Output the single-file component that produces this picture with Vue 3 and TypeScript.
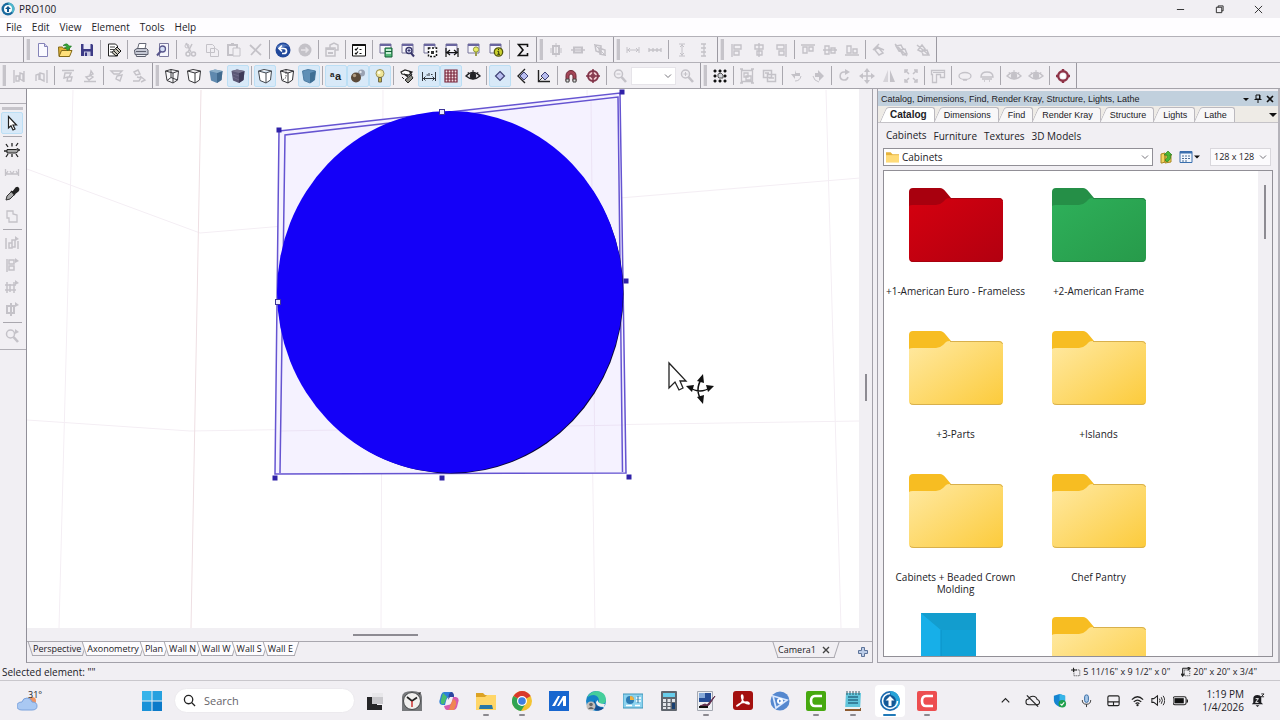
<script setup lang="ts">
import { ref } from 'vue'

interface Tool { name: string; on: boolean; off: boolean }

const parse = (spec: string): Tool[] =>
  spec.split(' ').map((t) => ({
    name: t.replace(/^[*-]/, ''),
    on: t.startsWith('*'),
    off: t.startsWith('-'),
  }))

const topRow = [
  'new open save | prefs | print preview | -cut -copy -paste -delete | undo -redo | -properties | checklist | winReport winZoom winSelect winWidth winLight winInfo | sum',
  '-centerV -centerH -centerD',
  '-spanH -stackH | -spanV -stackV',
  '-alignL -alignC -alignR | -alignT -alignM -alignB | -diagA -diagB -diagC',
].map(parse)

const bottomRow = [
  '-fitL -fitR | -fitT -fitB | -fitF -fitK',
  'cubeWire cubeLine cubeFill *cubeTex | *cubeSolid cubeEdge *cubeShade | *letters *spheres *bulb | brush *dims *grid eye | *snapNode snapEdge snapPlane | magnet target | -zoomOut combo -zoomIn',
  'selectAll | -group -ungroup | -rotL -rotR | -turn -move -mirror -scale | -shape | -lampA -lampB | -eyeA -eyeB | aim',
].map(parse)

const sideTools = parse('*pointer | light -measure picker -outline | -posA -posB -posC -posD | -find')

const cube = 'M1.500 3L7 1.500L14.500 3L13.500 12L9 15L3 12.500Z'
const cubeIn = 'M1.500 3L9 5L14.500 3M9 5V15'
const win = '<path d="M2 2h11v9H2z" fill="#f7f6fb" stroke="#77749a"/><path d="M2 3h11" stroke="#6a66a0" stroke-width="2"/>'
const cur = 'stroke="currentColor" fill="none"'
const eyeD = '<path d="M1 8Q8 1 15 8Q8 14 1 8Z" fill="none" stroke="currentColor" stroke-width="1.4"/><circle cx="8" cy="8" r="3.2" fill="currentColor"/><path d="M3 4l1 2M8 2v2M13 4l-1 2" stroke="currentColor"/>'
const lens = '<circle cx="6.500" cy="6" r="4" fill="none" stroke="currentColor" stroke-width="1.500"/><path d="M9.500 9L14 14" stroke="currentColor" stroke-width="2.600"/>'

const glyphs: Record<string, string> = {
  new: '<path d="M3.500 1.500h6l3 3v10h-9z" fill="#fafaff" stroke="#8583b8"/><path d="M9.500 1.500v3h3" fill="#d5d5f2" stroke="#8583b8"/>',
  open: '<path d="M1.500 5h4l1 1.500h6V14H2z" fill="#e4b335" stroke="#846a18"/><path d="M2 14.500L4.500 8.500H15L12.500 14.500Z" fill="#ffe07a" stroke="#846a18"/><path d="M6 3.500Q10 0 12 4h2.500L11 8.500 7.500 5.500H10Q9 3 6 3.500Z" fill="#35a535" stroke="#1f7422" stroke-width=".6"/>',
  save: '<path d="M2 2h11l1 1v11H2z" fill="#3d3b86"/><path d="M4.500 2h7v5h-7z" fill="#e9e9f6"/><path d="M5 9.500h6.500V14H5z" fill="#c9c9e2"/><path d="M6 10.500h2V14H6z" fill="#3d3b86"/>',
  prefs: '<path d="M2.500 2h7l2 2v10h-9z" fill="#fff" stroke="#222"/><path d="M4 5h5M4 7.500h4M4 10h3" stroke="#444"/><path d="M6 10.500L11 5l4 4-5 5z" fill="#c9c6b8" stroke="#111"/><path d="M8 9l3 3M10 7l3 3" stroke="#222"/>',
  print: '<path d="M4.500 7L6 1.500h7L12 7z" fill="#fff" stroke="#666977"/><path d="M1.500 8L4 6.500h9.500L15 8v4.500H2z" fill="#c5c8d4" stroke="#5d606e"/><path d="M3 12.500h10.500l-1 2H3.500z" fill="#eceef4" stroke="#5d606e"/><path d="M3 9.500h10" stroke="#5d606e"/>',
  preview: '<path d="M4.500 1.500h9v13h-9z" fill="#f5f5fc" stroke="#7c7a9e"/><circle cx="7.500" cy="7" r="3" fill="#d4def5" stroke="#59578d" stroke-width="1.300"/><path d="M5.500 9.500L2 13.500" stroke="#59578d" stroke-width="2"/>',
  cut: `<path d="M4 1l5 9M10 2l-4 8" ${cur} stroke-width="1.500"/><circle cx="5" cy="4" r="2" ${cur}/><circle cx="6" cy="12" r="2" ${cur} stroke-width="1.500"/><circle cx="11.500" cy="12" r="2" ${cur} stroke-width="1.500"/>`,
  copy: `<path d="M2.500 2.500h6l2 2v6h-8zM6.500 6.500h5l3 2v6h-8z" ${cur}/>`,
  paste: `<path d="M2 3h9v10H2z" ${cur} stroke-width="2"/><path d="M5 1h3v3H5z" fill="currentColor"/><path d="M7 6h7v8H7z" fill="#f1eff3" stroke="currentColor"/>`,
  delete: `<path d="M2 3l11 10M13 2L3 13" ${cur} stroke-width="1.800"/>`,
  undo: '<circle cx="8" cy="8" r="7.500" fill="#21489b"/><path d="M1.500 5Q8-1 14.500 5Q10 3 8 6Q4 8 1.500 5Z" fill="#698dcc" opacity=".7"/><path d="M7 3.500L4 6.500l3 3M4 6.500h5q2.500 0 2.500 2.500t-2.500 2.500H7" fill="none" stroke="#fff" stroke-width="1.700"/>',
  redo: '<circle cx="8" cy="8" r="6.500" fill="currentColor"/><path d="M4 8h7M8.500 5.500L11 8l-2.500 2.500" fill="none" stroke="#e6e4e8" stroke-width="1.500"/>',
  properties: `<path d="M2 6h9v8H2zM6 6V3l4-2 4 2v5h-3" ${cur} stroke-width="1.500"/><path d="M2 7h8M4 11h5" ${cur} stroke-width="2"/>`,
  checklist: '<path d="M1.500 2.500h13v11.500h-13z" fill="#fff" stroke="#111"/><path d="M1.500 3h13" stroke="#111" stroke-width="2"/><path d="M4 7l1 1 2-2.500M4 11l1 1 2-2.500M8.500 7.500h2M8.500 11.500h2" fill="none" stroke="#111" stroke-width="1.200"/>',
  winReport: win + '<path d="M7 6h7v9H7z" fill="#54b879" stroke="#155f37"/><path d="M8 8h5M8 11h5" stroke="#e9fff0" stroke-width="1.400"/><path d="M7 9.500h7" stroke="#155f37"/>',
  winZoom: win + '<circle cx="9" cy="8.500" r="3" fill="#dfe4fa" stroke="#39376b" stroke-width="1.400"/><path d="M11 11l3 3.500" stroke="#39376b" stroke-width="2"/><path d="M7.500 8.500h3M9 7v3" stroke="#39376b"/>',
  winSelect: win + '<path d="M6.500 6h8v8.500h-8z" fill="#fff" stroke="#111" stroke-width="1.500" stroke-dasharray="2 1.500"/><path d="M9 9h3v3H9z" fill="#333"/>',
  winWidth: win + '<path d="M2 6v9M14 6v9M3 10.500h10M6 8l-3 2.500L6 13M10 8l3 2.500-3 2.500" fill="none" stroke="#111" stroke-width="1.200"/>',
  winLight: win + '<circle cx="10" cy="7.500" r="2.600" fill="#e9ed66" stroke="#8e9638"/><path d="M9 10h2v4H9z" fill="#9a9b4d"/>',
  winInfo: win + '<circle cx="10.500" cy="10" r="4.200" fill="#c9d02e" stroke="#54580e" stroke-width="1.300"/><path d="M10.500 7v1.200M9.500 9.500h1.200V12M9.300 12.300h2.700" stroke="#30340a" fill="none"/>',
  sum: '<path d="M12.500 5V2.500H3.500L8 8l-4.500 5.500h9V11" fill="none" stroke="#111" stroke-width="1.600"/>',
  centerV: `<path d="M5 4h6v8H5z" ${cur} stroke-width="2"/><path d="M8 1v14M3 6v5M13 6v5" ${cur}/>`,
  centerH: `<path d="M4 5.500h8v5H4z" ${cur} stroke-width="2"/><path d="M1 8h14" ${cur} stroke-width="1.500"/>`,
  centerD: `<path d="M3 3l6 1v7l-5-2zM7 6l6 2v5l-5-1z" ${cur} stroke-width="1.500"/><path d="M2 2l12 12" ${cur}/>`,
  spanH: `<path d="M2 5v6M14 5v6M2 8h12M5 6L3 8l2 2M11 6l2 2-2 2" ${cur}/>`,
  stackH: `<path d="M2 6v4M6 6v4M10 6v4M14 6v4M2 8h12" ${cur} stroke-width="1.300"/>`,
  spanV: `<path d="M5 2h6M5 14h6M8 2v12M6 5l2-2 2 2M6 11l2 2 2-2" ${cur}/>`,
  stackV: `<path d="M5 2h5M5 6h5M5 10h5M5 14h5M8 2v12" ${cur} stroke-width="1.300"/>`,
  alignL: `<path d="M3 2v13M5 3h7v4H5zM5 9h5v4H5z" ${cur} stroke-width="1.400"/>`,
  alignC: `<path d="M8 1v14M4 3h8v4H4zM6 9h5v4H6z" ${cur} stroke-width="1.400"/>`,
  alignR: `<path d="M13 2v13M4 3h7v4H4zM6 9h5v4H6z" ${cur} stroke-width="1.400"/>`,
  alignT: `<path d="M1 3h14M3 5h4v6H3zM9 5h4v4H9z" ${cur} stroke-width="1.400"/>`,
  alignM: `<path d="M1 8h14M3 4h4v8H3zM9 6h4v5H9z" ${cur} stroke-width="1.400"/>`,
  alignB: `<path d="M1 13h14M3 4h4v7H3zM9 7h4v4H9z" ${cur} stroke-width="1.400"/>`,
  diagA: `<path d="M2 8L8 2M4 8l3-3 5 6-4 2zM6 5l7 3" ${cur} stroke-width="1.500"/>`,
  diagB: `<path d="M3 4l5-1 2 4-4 2zM7 8l5-1 2 5-4 1zM2 2l12 12" ${cur} stroke-width="1.500"/>`,
  diagC: `<path d="M3 8l4-5 3 4-3 3zM7 9l5-1 2 5H8zM2 3l12 10" ${cur} stroke-width="1.500"/>`,
  fitL: `<path d="M3 2v13M13 3v11M5 8h3v5H5zM9 5l3 1v7l-3-2z" ${cur} stroke-width="1.400"/>`,
  fitR: `<path d="M14 2v13M3 13V7l3-1v6M7 11V5l4 1v7z" ${cur} stroke-width="1.400"/>`,
  fitT: `<path d="M2 2.500h12M5 5h6L9 9h3l-1 4H7l1-4-4 1z" ${cur} stroke-width="1.400"/>`,
  fitB: `<path d="M2 13.500h12M9 3l2 3-3 1 3 2-4 3-3-3 4-1z" ${cur} stroke-width="1.400"/>`,
  fitF: `<path d="M2 3h11l-3 3H5zM8 8l5-1-2 6-4-2z" ${cur} stroke-width="1.400"/>`,
  fitK: `<path d="M3 4l4-2 2 4-4 1zM2 13h6l2-3-4-1M9 8l5 4-4 2" ${cur} stroke-width="1.400"/>`,
  cubeWire: `<path d="${cube}${cubeIn}M7 1.500V9.500L3 12.500M7 9.500l6.500 2.500" fill="#fff" fill-opacity=".5" stroke="#3b3b3f" stroke-width="1"/>`,
  cubeLine: `<path d="${cube}${cubeIn}" fill="#fff" stroke="#37373a" stroke-width="1"/>`,
  cubeFill: `<path d="${cube}" fill="#5f89ae"/><path d="M9 5L14.500 3L13.500 12L9 15Z" fill="#426b8f"/><path d="M1.500 3L7 1.500L14.500 3L9 5Z" fill="#8cafc9"/>`,
  cubeTex: `<path d="${cube}" fill="#5b5775"/><path d="M9 5L14.500 3L13.500 12L9 15Z" fill="#3e3b58"/><path d="M1.500 3L7 1.500L14.500 3L9 5Z" fill="#77748e"/><path d="M3 6l6 2M3 9l6 3" stroke="#6e6a88"/>`,
  cubeSolid: `<path d="${cube}${cubeIn}" fill="#fff" stroke="#444950"/>`,
  cubeEdge: `<path d="${cube}${cubeIn}" fill="#fff" stroke="#2f2f33"/><path d="M7 2v7.500L3 12.500" fill="none" stroke="#55555a" stroke-dasharray="1.500 1"/>`,
  cubeShade: `<path d="${cube}" fill="#5f8fb6" stroke="#4d7da4"/><path d="M9 5L14.500 3L13.500 12L9 15Z" fill="#3f6f94"/>`,
  letters: '<text x="2" y="9" font-size="8" font-weight="700" font-family="Liberation Sans, sans-serif" fill="#222">a</text><text x="7" y="12" font-size="11" font-weight="700" font-family="Liberation Sans, sans-serif" fill="#222">a</text>',
  spheres: '<circle cx="11.500" cy="5" r="3.500" fill="#9aa3b3"/><circle cx="10.500" cy="4" r="1.200" fill="#e3e8ef"/><circle cx="6" cy="9.500" r="5" fill="#5b4a39"/><circle cx="4.500" cy="7.500" r="1.700" fill="#b09b80"/>',
  bulb: '<circle cx="8" cy="5.500" r="4" fill="#efe598" stroke="#9b9055"/><path d="M6.500 9.500h3v4.500h-3z" fill="#c5b44b" stroke="#6f6a4a"/><circle cx="7" cy="4.500" r="1.500" fill="#fffde6"/>',
  brush: '<path d="M2 4l4-2 7 2-3 3-7-1zM5 6l4 3M10 3l3 4" fill="#fff" stroke="#222" stroke-width="1.200"/><path d="M6 12l6-5 2 3-5 5z" fill="#8a8a83" stroke="#222"/><path d="M3 9l2 2" stroke="#222"/>',
  dims: '<path d="M1.500 4v9M14.500 4v9M2 10.500h12M4.500 8.500l-2 2 2 2M11.500 8.500l2 2-2 2" fill="none" stroke="#30353c"/><path d="M5.500 7h1.500M8 5v3M10 6.500h1.500" stroke="#30353c"/>',
  grid: '<path d="M2 2h12v12H2zM5 2v12M8 2v12M11 2v12M2 5h12M2 8h12M2 11h12" fill="#f4dfe4" stroke="#772238" stroke-width="1.200"/>',
  eye: eyeD,
  snapNode: '<path d="M8 3.500L12.500 8 8 12.500 3.500 8z" fill="#b9bef0" stroke="#3f4174" stroke-width="1.200"/>',
  snapEdge: '<path d="M11 1L4 8l7 7" fill="none" stroke="#222" stroke-width="1.400"/><path d="M10 4L14 8 10 12 6 8z" fill="#b9bef0" stroke="#3f4174"/>',
  snapPlane: '<path d="M2.500 2v11.500H14" fill="none" stroke="#222" stroke-width="1.400"/><path d="M9 4L13 8 9 12 5 8z" fill="#b9bef0" stroke="#3f4174"/><path d="M3 13l4-4" stroke="#333"/>',
  magnet: '<path d="M3 13V7.500a5 5 0 0 1 10 0V13h-3V8a2 2 0 0 0-4 0v5z" fill="#a44557" stroke="#6d2836"/><path d="M3 11h3v3H3zM10 11h3v3h-3z" fill="#ddd" stroke="#444"/>',
  target: '<circle cx="8" cy="8" r="5" fill="#f2c9cf" stroke="#82354a" stroke-width="2"/><circle cx="8" cy="8" r="2" fill="none" stroke="#82354a"/><path d="M8 1v14M1 8h14" stroke="#82354a" stroke-width="1.500"/>',
  zoomOut: lens + '<path d="M4.500 6h4" stroke="currentColor"/>',
  zoomIn: lens + '<path d="M4.500 6h4M6.500 4v4" stroke="currentColor"/>',
  selectAll: '<path d="M2 2h2v2H2zM7 2h2v2H7zM12 2h2v2h-2zM2 7h2v2H2zM12 7h2v2h-2zM2 12h2v2H2zM7 12h2v2H7zM12 12h2v2h-2z" fill="#111" stroke="#111" stroke-width=".8"/><path d="M6 6l3-1 2 2v3H7L6 9z" fill="#d4d5dc" stroke="#555"/>',
  group: `<path d="M2.500 2.500h11v11h-11zM5 5h4v4H5zM7 8h5v4H7zM1 1h3M12 1h3M1 15h3M12 15h3" ${cur} stroke-width="1.300"/>`,
  ungroup: `<path d="M2.500 2.500h8v7h-8zM6.500 6.500h8v7h-8zM4 5h4M8 10h5" ${cur} stroke-width="1.500"/>`,
  rotL: '<path d="M7 2v4H3l4 5V8h5V5H8z" fill="currentColor"/><path d="M7 13q5 0 6-5" fill="none" stroke="currentColor"/>',
  rotR: '<path d="M8 2v3H5v4h4v4l5-5z" fill="currentColor"/><path d="M9 14Q4 13 3 8" fill="none" stroke="currentColor"/>',
  turn: `<path d="M10 4H7a4 4 0 1 0 4 5" ${cur} stroke-width="1.600"/><path d="M8 1l5 3-5 3z" fill="currentColor"/>`,
  move: `<path d="M8 2v12M2 8h12" ${cur} stroke-width="1.600"/><path d="M8 0l3 4H5zM8 16l3-4H5zM0 8l4-3v6zM16 8l-4-3v6z" fill="currentColor"/>`,
  mirror: '<path d="M7 2v12H2z" fill="currentColor" opacity=".6"/><path d="M9 2v12h5z" fill="currentColor"/>',
  scale: `<path d="M6 6L3 3M10 6l3-3M6 10l-3 3M10 10l3 3M2 5V2h3M11 2h3v3M2 11v3h3M11 14h3v-3" ${cur} stroke-width="1.500"/>`,
  shape: `<path d="M1.500 2.500h13v7h-4v-3h-4v8h-4v-8h-1z" ${cur} stroke-width="1.300"/><path d="M3 4.500h11" ${cur}/>`,
  lampA: `<ellipse cx="8" cy="8" rx="6" ry="3.500" ${cur} stroke-width="1.300"/><path d="M6 12h4" ${cur} stroke-width="1.500"/>`,
  lampB: `<path d="M2 9q0-5 6-5t6 5zM3 11h10M5 13h1M10 13h1" ${cur} stroke-width="1.400"/>`,
  eyeA: eyeD,
  eyeB: eyeD,
  aim: '<circle cx="8" cy="8" r="4.800" fill="none" stroke="#8e3347" stroke-width="2.400"/><circle cx="8" cy="8" r="2.500" fill="#fff"/><path d="M8 1v3M8 12v3M1 8h3M12 8h3" stroke="#8e3347" stroke-width="2.400"/>',
  pointer: '<path d="M4.500 1.500V13l2.500-2.200L9 15l2-1-2-4h3.500z" fill="#fff" stroke="#222" stroke-width="1.200"/>',
  light: '<path d="M3 7.500h9l2-1v3l-2 1.500H3z" fill="#a7a7a7" stroke="#222"/><path d="M4 5L2 2M8 4.500V1M12 4l2-3M4 12l-2 3M8 12v3M12 12l2 3M0 9h3M14 8h2" stroke="#222" stroke-width="1.300"/>',
  measure: `<path d="M1.500 5v7M14.500 5v7M2 10h12M4 7l-2 3M12 7l2 3M6 7l2 3M10 7L8 10" ${cur} stroke-width="1.300"/>`,
  picker: '<path d="M2 14l1-4 5-5 3 3-5 5z" fill="#aaa" stroke="#333"/><path d="M7 5l4 4M9 6l3-4q2-1 2.500.5T14 5l-4 3z" fill="#222" stroke="#222" stroke-width="1.500"/>',
  outline: `<path d="M3 3h6v3l4 1v7H5v-4H3z" ${cur} stroke-width="1.300"/>`,
  posA: `<path d="M2 3v11M14 6v8M5 8h3v5H5zM8 5h3v7H8z" ${cur} stroke-width="1.500"/><path d="M11 1l4 3-4 2z" fill="currentColor"/>`,
  posB: `<path d="M3 2v13M5 3h5v4H5zM5 9h5v4H5z" ${cur} stroke-width="1.500"/><path d="M11 1l4 3-4 2z" fill="currentColor"/>`,
  posC: `<path d="M3 3v11M10 3v11M1 6h11M1 11h11M6 5v8" ${cur} stroke-width="1.500"/><path d="M11 1l4 3-4 2z" fill="currentColor"/>`,
  posD: `<path d="M7 2v13M3 5h7v7H3z" ${cur} stroke-width="2"/><path d="M11 1l4 3-4 2z" fill="currentColor"/>`,
  find: lens + '<path d="M11 1l4 3-4 2z" fill="currentColor"/>',
}

const menus = ['File', 'Edit', 'View', 'Element', 'Tools', 'Help']
const panelTabs = ['Catalog', 'Dimensions', 'Find', 'Render Kray', 'Structure', 'Lights', 'Lathe']
const catalogTabs = ['Cabinets', 'Furniture', 'Textures', '3D Models']
const viewTabs = ['Perspective', 'Axonometry', 'Plan', 'Wall N', 'Wall W', 'Wall S', 'Wall E']
const activePanel = ref('Catalog')
const activeCatalog = ref('Cabinets')
const activeView = ref('Perspective')

const folders = [
  { label: '+1-American Euro - Frameless', kind: 'red' },
  { label: '+2-American Frame', kind: 'green' },
  { label: '+3-Parts', kind: 'yellow' },
  { label: '+Islands', kind: 'yellow' },
  { label: 'Cabinets + Beaded Crown Molding', kind: 'yellow' },
  { label: 'Chef Pantry', kind: 'yellow' },
  { label: '', kind: 'cabinet' },
  { label: '', kind: 'yellow' },
]

const handles = [
  [279, 130, 0], [622, 92, 0], [442, 112, 1], [278, 302, 1],
  [626, 281, 0], [275, 478, 0], [442, 478, 0], [629, 477, 0],
]

const apps = [
  { name: 'Task View', run: 0, art: '<path d="M2 6h10v8h5v5H2z" fill="#252527"/><path d="M7 2h11v11H7z" fill="#c9c8cc"/><path d="M7 2h11v4H7z" fill="#e8e7ea"/>' },
  { name: 'Clock', run: 0, art: '<path d="M0 6q0-6 10-6t10 6v14H0z" fill="#77797c"/><circle cx="10" cy="10" r="8.500" fill="#f1f0ef" stroke="#47494c"/><path d="M5 6L10 10l5-3.500" fill="none" stroke="#222" stroke-width="1.800"/><path d="M10 10v6" stroke="#c33" stroke-width="1.500"/><path d="M16 2l3-1-1 3z" fill="#333"/>' },
  { name: 'Copilot', run: 0, art: '<path d="M5 1h7q2 0 3 4l-4 1q-3 0-4 4l-1 4H3q-4-1-2-6l1-4Q3 1 5 1z" fill="#2d7fd8"/><path d="M4 2L2 9q-1 5 3 4l3-7z" fill="#48bd6f"/><path d="M15 19H8q-2 0-3-4l4-1q3 0 4-4l1-4h3q4 1 2 6l-1 4q-1 3-3 3z" fill="#d65bb0"/><path d="M15 19l2-5q1-5-3-6l-3 7q0 4-3 4z" fill="#ef8653"/><path d="M12 1q3 0 3 5h-4l-2 3 1-6z" fill="#2d459f"/>' },
  { name: 'File Explorer', run: 1, art: '<path d="M0 2h7l2 2h11v13H0z" fill="#dca224"/><path d="M0 6h9l2-2h9v15H0z" fill="#ffd668"/><path d="M4 14h12l1 4H3z" fill="#2a77a6"/>' },
  { name: 'Chrome', run: 1, art: '<circle cx="10" cy="10" r="10" fill="#f3c331"/><path d="M10 10L1.500 5A10 10 0 0 1 18.700 5z" fill="#d8382c"/><path d="M10 10L1.300 5A10 10 0 0 0 9 20l5-8z" fill="#30a352"/><circle cx="10" cy="10" r="5" fill="#fff"/><circle cx="10" cy="10" r="3.800" fill="#3f7fe0"/>' },
  { name: 'MyASUS', run: 0, art: '<path d="M0 0h20v20H0z" fill="#1766cf"/><path d="M3 15L9 5h2L6 15zM8 15l6-10h3v10h-3V9l-4 6z" fill="#fff"/>' },
  { name: 'Edge', run: 0, art: '<circle cx="10" cy="10" r="10" fill="#1583c7"/><path d="M1 7Q4 0 11 0q9 1 9 9 0 4-5 4-4 0-2-3Q13 5 8 4 3 4 1 7z" fill="#45ce9b"/><path d="M9 9q-1 7 9 8-4 4-9 2Q5 15 9 9z" fill="#174f92"/><path d="M12 9q-1 4 7 4l-1 3q-8 0-8-5z" fill="#f1eff3"/><circle cx="5" cy="15" r="4.500" fill="#c3bfbb"/><circle cx="5" cy="13.500" r="1.800" fill="#666"/><path d="M2 18q3-4 6 0z" fill="#666"/>' },
  { name: 'Control Panel', run: 0, art: '<path d="M0 3h20v14H0z" fill="#8bd2ee" stroke="#3e94b9"/><circle cx="7" cy="9" r="4" fill="#2d7bb4"/><path d="M7 9V5a4 4 0 0 1 4 4z" fill="#f2b13d"/><path d="M13 7h5M13 10h5M3 14.500h6M12 14.500h5" stroke="#fff" stroke-width="1.500"/><path d="M15 5v7" stroke="#34749c"/>' },
  { name: 'Calculator', run: 0, art: '<rect x="2" width="16" height="20" rx="1" fill="#60666e"/><path d="M4 2h12v4H4z" fill="#68cdea"/><path d="M4 8h3v3H4zM8.500 8h3v3h-3zM13 8h3v3h-3zM4 12h3v3H4zM8.500 12h3v3h-3zM4 16h3v2H4zM8.500 16h3v2h-3z" fill="#e3e6ea"/><path d="M13 12h3v6h-3z" fill="#183f70"/>' },
  { name: 'Paint Tool', run: 1, art: '<path d="M1.500 .5h15v19h-15z" fill="#eceef2" stroke="#a4a8b1"/><path d="M3 2h12v9H3z" fill="#254c96"/><path d="M3 2h6v5H3z" fill="#86a9d8"/><path d="M4 15l5-2 2 1 8-9-6 9-6 2z" fill="#602f4d" stroke="#602f4d"/><path d="M3 16h9" stroke="#111" stroke-width="2"/>' },
  { name: 'Acrobat', run: 0, art: '<rect x="0" y="0" width="20" height="19" rx="3" fill="#a4100f"/><path d="M4 15q5-2 6-8 0-3-1-3t0 4q2 5 7 5 1-1-2-2-5 0-8 2-3 2-2 2z" fill="none" stroke="#fff" stroke-width="1.400"/>' },
  { name: 'Video Player', run: 0, art: '<circle cx="10" cy="10" r="9.500" fill="#5588cf"/><path d="M3 5l14 4-11 8z" fill="none" stroke="#dbe9ff" stroke-width="1.700"/><circle cx="10" cy="10" r="3" fill="#fff"/><path d="M9 8.500l2.500 1.500L9 11.500z" fill="#5588cf"/>' },
  { name: 'Camtasia', run: 1, art: '<rect width="20" height="20" rx="2" fill="#47a910"/><path d="M16 5H9Q5 5 5 10t4 5h7" fill="none" stroke="#fff" stroke-width="2.600"/>' },
  { name: 'Notepad', run: 1, art: '<path d="M3 2h15l-1 17H2z" fill="#62c6dc"/><path d="M2 17h16v3H2z" fill="#8d5a2e"/><path d="M2 16h15v2H2z" fill="#e9f2f3"/><path d="M5 6h10M5 9h10M5 12h10" stroke="#286c86" stroke-width="1.500"/><path d="M4 0v4M7 0v4M10 0v4M13 0v4M16 0v4" stroke="#345965"/>' },
  { name: 'PRO100', run: 2, art: '<circle cx="10" cy="10" r="10" fill="#1b6bb0"/><path d="M10 0a10 10 0 0 1 7 17l-4-5z" fill="#29a4d8"/><circle cx="10" cy="10" r="7.500" fill="none" stroke="#fff" stroke-width="1.500" stroke-dasharray="35 12"/><circle cx="10" cy="10" r="6" fill="#145795"/><path d="M10 5l4.500 4.500h-3V15h-3V9.500h-3z" fill="#fff"/>' },
  { name: 'Camtasia Recorder', run: 1, art: '<rect width="20" height="20" rx="2" fill="#ed4e50"/><path d="M16 5H9Q5 5 5 10t4 5h7" fill="none" stroke="#fff" stroke-width="2.600"/>' },
]

const tray = [
  { name: 'Hidden icons', x: 'm', art: '<path d="M4 10l4-4 4 4" fill="none" stroke="#222" stroke-width="1.300"/>' },
  { name: 'Cloud sync off', x: 'm', art: '<path d="M4 12.500q-3 0-3-3t3-3q1-3 4.500-3T13 7q2.500.5 2.500 3t-3 2.500z" fill="none" stroke="#222" stroke-width="1.100"/><path d="M2 2.500l12 12" stroke="#222" stroke-width="1.300"/>' },
  { name: 'Security', x: 'm', art: '<path d="M8 1l6 2v5q0 4-6 7-6-3-6-7V3z" fill="#1685d1"/><path d="M8 1l6 2v5H8z" fill="#36b5e8"/><circle cx="11" cy="11.500" r="4" fill="#1fa04b"/><path d="M9 11.500l1.500 1.500 2.500-3" fill="none" stroke="#fff" stroke-width="1.200"/>' },
  { name: 'Microphone', x: 'm', art: '<rect x="6" y="2" width="4" height="8" rx="2" fill="#a9c8e8" stroke="#3068a3"/><path d="M3.500 7.500q0 4.500 4.500 4.500t4.500-4.500M8 12v3" fill="none" stroke="#333"/>' },
  { name: 'Touchpad', x: 'm', art: '<rect x="2" y="3" width="12" height="10.500" rx="1.500" fill="none" stroke="#222" stroke-width="1.200"/><path d="M2 9.500h12M8 9.500v4" stroke="#222" stroke-width="1.200"/>' },
  { name: 'Wi-Fi', x: 's', art: '<path d="M2 7q6-6 12 0M4 9.500q4-4 8 0M6 11.500q2-2 4 0" fill="none" stroke="#222" stroke-width="1.300"/><circle cx="8" cy="13" r="1.200" fill="#222"/>' },
  { name: 'Volume', x: 's', art: '<path d="M2 6h2l4-3v10L4 10H2z" fill="none" stroke="#222" stroke-width="1.100"/><path d="M10 6q1.500 2 0 4M12 4.500q2.500 3.500 0 7M14 3q3.500 5 0 10" fill="none" stroke="#222"/>' },
  { name: 'Battery', x: 'm', art: '<rect x="0" y="4" width="14" height="8.500" rx="2" fill="none" stroke="#222" stroke-width="1.200"/><rect x="1.500" y="5.500" width="10" height="5.500" fill="#111"/><path d="M15.500 7v3" stroke="#222" stroke-width="1.300"/>' },
]
</script>

<template>
  <div class="desktop">
    <header class="titlebar">
      <svg class="logo" viewBox="0 0 14 14"><circle cx="7" cy="7" r="6.500" fill="#1a6a9e" /><path d="M7 .5A6.500 6.500 0 0 1 12 11L9 8z" fill="#4fb6cc" /><circle cx="7" cy="7" r="4" fill="#fff" /><path d="M7 4l3 3H8v3H6V7H4z" fill="#12568e" /></svg>
      <span>PRO100</span>
      <div class="winbtns">
        <button aria-label="Minimize"><svg viewBox="0 0 10 10"><path d="M1 5h8" /></svg></button>
        <button aria-label="Restore"><svg viewBox="0 0 10 10"><path d="M1.500 2.500h6v6h-6zM3.500 2.500v-1.500h5.500v5.500h-1.500" /></svg></button>
        <button aria-label="Close"><svg viewBox="0 0 10 10"><path d="M1 1l8 8M9 1L1 9" /></svg></button>
      </div>
    </header>

    <nav class="menubar"><button v-for="m in menus" :key="m">{{ m }}</button></nav>

    <div class="toolrow first">
      <div class="blank"></div>
      <div v-for="(g, gi) in topRow" :key="gi" class="toolgroup">
        <template v-for="(t, ti) in g" :key="ti">
          <i v-if="t.name === '|'" class="sep"></i>
          <button v-else class="tool" :class="{ on: t.on }" :disabled="t.off" :aria-label="t.name">
            <svg viewBox="0 0 16 16" v-html="glyphs[t.name]"></svg>
          </button>
        </template>
      </div>
    </div>
    <div class="toolrow second">
      <div v-for="(g, gi) in bottomRow" :key="gi" class="toolgroup">
        <template v-for="(t, ti) in g" :key="ti">
          <i v-if="t.name === '|'" class="sep"></i>
          <div v-else-if="t.name === 'combo'" class="zoombox">
            <select aria-label="Zoom"><option></option></select>
            <svg class="chev" viewBox="0 0 8 8"><path d="M1 2.500l3 3 3-3" /></svg>
          </div>
          <button v-else class="tool" :class="{ on: t.on }" :disabled="t.off" :aria-label="t.name">
            <svg viewBox="0 0 16 16" v-html="glyphs[t.name]"></svg>
          </button>
        </template>
      </div>
    </div>

    <main class="work">
      <aside class="side">
        <div class="sidetools">
          <i class="hgrip"></i>
          <template v-for="(t, ti) in sideTools" :key="ti">
            <i v-if="t.name === '|'" class="hsep"></i>
            <button v-else class="tool" :class="{ on: t.on }" :disabled="t.off" :aria-label="t.name">
              <svg viewBox="0 0 16 16" v-html="glyphs[t.name]"></svg>
            </button>
          </template>
        </div>
      </aside>

      <section class="editor">
        <div class="scene">
          <svg class="canvas" viewBox="27 89 832 539" preserveAspectRatio="xMinYMin slice">
            <g fill="none" stroke="#f4eef4">
              <path d="M73 90L59 628M383 90L381 628M587 90L595 628M826 90L841 628" />
              <path d="M27 169L200 233L860 178M27 420L190 431L860 421" />
              <path d="M201 90L191 628" stroke="#eedfe3" />
            </g>
            <path d="M279 131L620 93L626 473L275 474Z" fill="#f5f2ff" />
            <path d="M591 100L595 472M280 431L624 425" stroke="#ece3f5" fill="none" />
            <g fill="none" stroke="#6554d1" stroke-width="1.500">
              <path d="M279 131L620 93L626 473L275 474Z" />
              <path d="M280 473L285 135L618 97L622.500 472" />
            </g>
            <ellipse cx="451.500" cy="293.500" rx="172" ry="180" fill="#0a0838" />
            <ellipse cx="450" cy="292" rx="173" ry="181" fill="#1400f8" />
            <rect
              v-for="(h, i) in handles" :key="i" :x="h[0] - 2.500" :y="h[1] - 2.500" width="5" height="5"
              :fill="h[2] ? '#e9e6ff' : '#3022a8'" :stroke="h[2] ? '#3d3498' : 'none'"
            />
            <path d="M669 363V388L675 382L679 390L683 388L680 381H686Z" fill="#fff" stroke="#222" stroke-width="1.300" />
            <path d="M689 387Q700 395 711 387M702 378Q694 390 702 401" fill="none" stroke="#111" stroke-width="1.500" />
            <path d="M686 386l8-1-2 7zM714 386l-8-1 2 7zM703 374l1 9-7-2zM703 404l1-9-7 2z" fill="#111" />
          </svg>
          <div class="vscroll"><i></i></div>
        </div>
        <div class="hscroll"><i></i></div>
        <div class="viewtabs">
          <button v-for="v in viewTabs" :key="v" :class="{ current: v === activeView }" @click="activeView = v"><span>{{ v }}</span></button>
          <button class="camera current"><span>Camera1</span><svg viewBox="0 0 8 8"><path d="M1 1l6 6M7 1L1 7" /></svg></button>
          <button class="addcam" aria-label="Add camera"><svg viewBox="0 0 10 10"><path d="M3.500 .5h3v3h3v3h-3v3h-3v-3h-3v-3h3z" /></svg></button>
        </div>
      </section>

      <section class="panel">
        <div class="paneltitle">
          <span>Catalog, Dimensions, Find, Render Kray, Structure, Lights, Lathe</span>
          <button aria-label="Panel menu"><svg viewBox="0 0 10 10"><path d="M2 4h6L5 7z" fill="#111" /></svg></button>
          <button aria-label="Pin"><svg viewBox="0 0 10 10"><path d="M3 1h4v4H3zM1.500 5.500h7M5 5.500V9M6.500 1v4" fill="none" stroke="#111" /></svg></button>
          <button aria-label="Close panel"><svg viewBox="0 0 10 10"><path d="M2 2l6 6M8 2L2 8" stroke="#111" stroke-width="1.600" /></svg></button>
        </div>
        <div class="paneltabs">
          <button v-for="p in panelTabs" :key="p" :class="{ current: p === activePanel }" @click="activePanel = p"><span>{{ p }}</span></button>
          <button class="more" aria-label="More tabs"><svg viewBox="0 0 10 10"><path d="M1 3h8L5 7z" fill="#111" /></svg></button>
        </div>
        <div class="panelbody">
          <div class="subtabs">
            <button v-for="c in catalogTabs" :key="c" :class="{ current: c === activeCatalog }" @click="activeCatalog = c">{{ c }}</button>
          </div>
          <div class="pathrow">
            <div class="pathbox">
              <svg class="mini" viewBox="0 0 14 12"><path d="M0 1h5l2 2h7v8H0z" fill="#e6b33c" /><path d="M0 4h14v8H0z" fill="#ffdb78" /></svg>
              <select aria-label="Folder"><option>Cabinets</option></select>
              <svg class="chev" viewBox="0 0 8 8"><path d="M1 2.500l3 3 3-3" /></svg>
            </div>
            <button class="up" aria-label="Up one level"><svg viewBox="0 0 14 14"><path d="M2 4l4-1v9l-3 1H2zM6 5h6v7l-6 1z" fill="#f4d35e" stroke="#a88721" /><path d="M8 12q5-3 3-7h2L9 1 5 5h3q1 3-2 5z" fill="#4bb834" stroke="#2c7d1f" stroke-width=".7" /></svg></button>
            <button class="viewmode" aria-label="View mode"><svg viewBox="0 0 22 14"><path d="M1 1.500h12v11H1z" fill="#f2f7fd" stroke="#3a6fae" /><path d="M1 2.500h12" stroke="#3a6fae" stroke-width="2" /><path d="M3 6h2M6 6h2M9 6h2M3 8.500h2M6 8.500h2M9 8.500h2M3 11h2M6 11h2" stroke="#4b6e98" /><path d="M15 5.500h6l-3 3z" fill="#111" /></svg></button>
            <div class="sizebox">
              <select aria-label="Thumbnail size"><option>128 x 128</option></select>
              <svg class="chev" viewBox="0 0 8 8"><path d="M1 2.500l3 3 3-3" /></svg>
            </div>
          </div>
          <div class="listbox">
            <svg class="defs" aria-hidden="true">
              <defs>
                <linearGradient id="g-yellow" x2="1" y2="1"><stop stop-color="#ffe9a2" /><stop offset="1" stop-color="#fccb3b" /></linearGradient>
                <linearGradient id="g-red" x2="1" y2="1"><stop stop-color="#d5000f" /><stop offset="1" stop-color="#b20010" /></linearGradient>
                <linearGradient id="g-green" x2="1" y2="1"><stop stop-color="#2eb05a" /><stop offset="1" stop-color="#279a4a" /></linearGradient>
              </defs>
            </svg>
            <div class="items">
              <button v-for="(f, i) in folders" :key="i" class="item" :class="f.kind" :aria-label="f.label || f.kind">
                <svg v-if="f.kind === 'cabinet'" viewBox="0 0 94 75"><path d="M12-4h55v80H12z" fill="#11a2d7" /><path d="M12-4l20 17v63H12z" fill="#17afe8" /><path d="M12-4h55v17H32z" fill="#139dce" /><path d="M32 13v60" stroke="#0d91c7" /></svg>
                <svg v-else viewBox="0 0 94 75">
                  <path class="back" d="M0 4Q0 0 4 0H31Q34 0 37 4L42 10V18H0Z" />
                  <path class="front" :fill="`url(#g-${f.kind})`" d="M0 18Q1 17 4 17H27Q31 17 34 14L37 11Q38 10 41 10H90Q94 10 94 14V70Q94 74 90 74H4Q0 74 0 70Z" />
                  <path class="rim" d="M41 10.500H90Q93 10.500 93.500 13M1 72Q2 73.500 5 73.500H89Q92 73.500 93 72" fill="none" />
                </svg>
                <span>{{ f.label }}</span>
              </button>
            </div>
            <div class="listscroll"><i></i></div>
          </div>
        </div>
      </section>
    </main>

    <footer class="status">
      <span class="sel">Selected element: ""</span>
      <svg viewBox="0 0 12 12"><path d="M3.500 3.500h7v7h-7z" fill="none" stroke="#444" stroke-dasharray="1.500 1" /><path d="M0 3.500h7M3 1v5" stroke="#222" stroke-width="1.300" /></svg>
      <span class="pos">5 11/16" x 9 1/2" x 0"</span>
      <svg viewBox="0 0 12 12"><path d="M4 3.500h6.500v7H4z" fill="none" stroke="#444" stroke-dasharray="1.500 1" /><path d="M2 1.500h8M2 1.500V10M0 8l2 3 2-3M8 0l3 1.500L8 4" fill="none" stroke="#222" stroke-width="1.300" /></svg>
      <span class="dim">20" x 20" x 3/4"</span>
    </footer>

    <nav class="taskbar">
      <button class="weather" aria-label="Weather">
        <svg viewBox="0 0 22 22"><circle cx="15" cy="11" r="4" fill="#ef9463" /><path d="M5 20q-5 0-5-4t5-4q1-4 5-4t5 4q5 0 5 4t-5 4z" fill="#a9c8f2" stroke="#7ba2dc" /></svg>
        <span>31°</span>
      </button>
      <button class="start" aria-label="Start"><svg viewBox="0 0 20 20"><path d="M0 0h9.500v9.500H0z" fill="#37b4ea" /><path d="M10.500 0H20v9.500h-9.500z" fill="#26a1df" /><path d="M0 10.500h9.500V20H0z" fill="#1992d8" /><path d="M10.500 10.500H20V20h-9.500z" fill="#0b7ac9" /></svg></button>
      <label class="search">
        <svg viewBox="0 0 14 14"><circle cx="6" cy="6" r="4.500" /><path d="M9.500 9.500l3.500 3.500" /></svg>
        <input type="text" placeholder="Search" aria-label="Search" />
      </label>
      <div class="apps">
        <button v-for="a in apps" :key="a.name" :aria-label="a.name" :class="{ running: a.run > 0, focused: a.run === 2 }">
          <svg viewBox="0 0 20 20" v-html="a.art"></svg>
        </button>
      </div>
      <div class="tray">
        <button v-for="t in tray" :key="t.name" :class="t.x" :aria-label="t.name"><svg viewBox="0 0 16 16" v-html="t.art"></svg></button>
        <button class="clock"><span>1:19 PM</span><span>1/4/2026</span></button>
        <button class="bell" aria-label="Notifications"><svg viewBox="0 0 16 16"><path d="M2 12l1.500-2V6q0-4 4.500-4 3 0 4 2v6l2 2z" fill="#1c1c20" /><path d="M6 13h4l-2 2z" fill="#1c1c20" /><path d="M6 6h3L6 10h3" stroke="#fff" fill="none" /><path d="M12 1h3l-3 3h3" stroke="#222" fill="none" /></svg></button>
      </div>
    </nav>
  </div>
</template>

<style>
body { margin: 0; background: #f1eff3; }
</style>

<style scoped>
* { box-sizing: border-box; }
.desktop {
  display: flex; flex-direction: column; height: 100vh; overflow: hidden;
  font-family: "Open Sans", "Noto Sans", sans-serif; font-size: 10px; line-height: 12px;
  color: #222126; background: #f1eff3;
}
button { border: 0; padding: 0; margin: 0; background: none; font: inherit; color: inherit; }
select, input { font: inherit; color: inherit; border: 0; background: none; outline: 0; padding: 0; margin: 0; appearance: none; min-width: 0; }
svg { display: block; flex: none; }

.titlebar { display: flex; align-items: center; height: 18px; flex: none; padding: 0 2px 0 1px; gap: 4px; }
.logo { width: 14px; height: 14px; }
.winbtns { margin-left: auto; display: flex; }
.winbtns button { width: 39px; height: 18px; display: grid; place-items: center; }
.winbtns svg { width: 9px; height: 9px; fill: none; stroke: #222; }

.menubar { display: flex; align-items: center; height: 18px; flex: none; gap: 10px; padding-left: 6px; background: #fefdff; }

.toolrow { display: flex; height: 26px; flex: none; border-top: 1px solid #b3b1b8; }
.second { height: 27px; border-bottom: 1px solid #a5a3aa; }
.blank { width: 23px; }
.toolgroup { display: flex; align-items: center; padding-right: 2px; border-left: 1px solid #9b99a1; }
.second .toolgroup:first-child { border-left: 0; }
.toolgroup:last-child { border-right: 1px solid #9b99a1; }
.toolgroup::before { content: ""; width: 3px; height: 21px; margin: 0 2px; background: #c6c4ca; border-left: 1px solid #e2e0e5; }
.tool { width: 22px; height: 22px; flex: none; display: grid; place-items: center; color: #232327; border: 1px solid transparent; border-radius: 2px; }
.tool svg { width: 16px; height: 16px; }
.tool:disabled { color: #c4c2c8; }
.tool.on { background: #d8e9f8; border-color: #bcdff5; }
.sep { width: 1px; height: 19px; margin: 0 2px; background: #a9a7ae; }
.zoombox { display: flex; align-items: center; width: 45px; height: 18px; background: #fff; border: 1px solid #e6e4e9; padding-right: 3px; }
.zoombox select { flex: 1; height: 16px; }
.chev { width: 8px; height: 8px; fill: none; stroke: #77757c; pointer-events: none; }

.work { display: flex; flex: 1; min-height: 0; }
.side { width: 26px; flex: none; padding-top: 14px; }
.sidetools { display: flex; flex-direction: column; align-items: center; padding-bottom: 2px; padding-right: 2px; border-top: 1px solid #b1afb6; border-bottom: 1px solid #b1afb6; }
.hgrip { width: 21px; height: 3px; margin: 3px 0 2px; background: #c6c4ca; }
.hsep { width: 19px; height: 1px; margin: 2px 0; background: #a9a7ae; }

.editor { flex: 1; min-width: 0; display: flex; flex-direction: column; border-left: 1px solid #918f98; border-right: 1px solid #a3a1a9; border-bottom: 1px solid #a3a1a9; }
.scene { flex: 1; min-height: 0; display: flex; }
.canvas { flex: 1; min-width: 0; width: 100%; height: 100%; background: #fff; }
.vscroll { width: 13px; display: grid; place-items: center; padding-top: 57px; }
.vscroll i { width: 2px; height: 27px; background: #8d8b92; }
.hscroll { height: 13px; flex: none; display: grid; place-items: center; padding-right: 129px; }
.hscroll i { width: 65px; height: 2px; background: #8d8b92; }

.viewtabs { height: 21px; flex: none; display: flex; align-items: flex-start; border-top: 1px solid #a9a7ae; padding-left: 3px; font-size: 9px; }
.viewtabs button { position: relative; height: 14px; padding: 0 3px; }
.viewtabs button span { position: relative; z-index: 1; }
.viewtabs button::before, .viewtabs button::after { content: ""; position: absolute; top: 0; bottom: 0; width: 55%; background: #fdfcfe; border-bottom: 1px solid #a9a7ae; }
.viewtabs button::before { left: 0; border-left: 1px solid #a9a7ae; transform: skewX(18deg); }
.viewtabs button::after { right: -1px; border-right: 1px solid #a9a7ae; transform: skewX(-18deg); }
.viewtabs button.current::before, .viewtabs button.current::after { background: #f1eff3; }
.viewtabs .camera { margin-left: auto; margin-right: 22px; display: flex; align-items: center; gap: 6px; height: 16px; padding: 0 6px 0 3px; }
.camera svg { position: relative; z-index: 1; width: 8px; height: 8px; stroke: #444; stroke-width: 1.4; }
.viewtabs .addcam { padding: 5px 4px 0 0; }
.viewtabs .addcam::before, .viewtabs .addcam::after { display: none; }
.addcam svg { width: 10px; height: 10px; fill: #bccde8; stroke: #5d7399; }

.panel { width: 403px; flex: none; margin-left: 4px; display: flex; flex-direction: column; border-left: 1px solid #a3a1a9; border-bottom: 1px solid #a3a1a9; border-right: 2px solid #b5b3ba; padding-top: 2px; }
.paneltitle { display: flex; align-items: center; height: 15px; flex: none; background: #c1d0dd; padding: 0 2px 0 3px; font-family: "Liberation Sans", sans-serif; font-size: 9px; }
.paneltitle span { flex: 1; white-space: nowrap; }
.paneltitle button { width: 12px; display: grid; place-items: center; }
.paneltitle svg, .paneltabs svg { width: 10px; height: 10px; }
.paneltabs { display: flex; align-items: flex-end; height: 17px; flex: none; padding-left: 3px; background: #eeebe6; font-family: "Liberation Sans", sans-serif; font-size: 9px; border-bottom: 1px solid #c5c3c8; }
.paneltabs button { position: relative; height: 15px; padding: 0 8px 0 9px; white-space: nowrap; }
.paneltabs button span { position: relative; z-index: 1; }
.paneltabs button:not(.more)::before, .paneltabs button:not(.more)::after { content: ""; position: absolute; top: 0; bottom: 0; background: #f8f7f8; border-top: 1px solid #bbb9bf; }
.paneltabs button:not(.more)::before { left: 2px; width: 50%; border-left: 1px solid #bbb9bf; border-top-left-radius: 3px; transform: skewX(-24deg); }
.paneltabs button:not(.more)::after { right: 0; width: 60%; border-right: 1px solid #bbb9bf; border-top-right-radius: 3px; }
.paneltabs .current { font-weight: 700; font-size: 10px; }
.paneltabs button.current::before, .paneltabs button.current::after { background: #fff; }
.paneltabs .more { margin-left: auto; padding: 0; }

.panelbody { flex: 1; min-height: 0; display: flex; flex-direction: column; padding: 4px 5px 5px 5px; }
.subtabs { display: flex; align-items: flex-start; height: 21px; flex: none; gap: 7px; padding: 3px 0 0 3px; }
.subtabs .current { margin-top: -1px; }
.pathrow { display: flex; align-items: center; height: 18px; flex: none; margin-bottom: 4px; padding-right: 2px; }
.pathbox { flex: 1; display: flex; align-items: center; height: 18px; padding: 0 3px 0 2px; gap: 3px; background: #fff; border: 1px solid #918f96; }
.mini { width: 13px; height: 12px; }
.pathbox select { flex: 1; }
.up { margin-left: 6px; }
.up svg { width: 14px; height: 14px; }
.viewmode { margin-left: 6px; }
.viewmode svg { width: 22px; height: 14px; }
.sizebox { display: flex; align-items: center; width: 61px; height: 18px; margin-left: 9px; padding: 0 3px; background: #fcfbfd; border: 1px solid #d9d7dc; font-size: 9px; }
.sizebox select { flex: 1; }
.listbox { flex: 1; min-height: 0; display: flex; overflow: hidden; background: #fff; border: 1px solid #918f96; }
.defs { width: 0; height: 0; }
.items { flex: 1; display: grid; grid-template-columns: repeat(auto-fill, 143px); grid-auto-rows: 143px; align-content: start; padding: 17px 0 0; }
.item { display: flex; flex-direction: column; align-items: center; justify-content: flex-start; gap: 22px; }
.item > svg { width: 94px; height: 75px; overflow: visible; }
.item span { width: 142px; }
.back { fill: #f7bd22; }
.rim { stroke: #d8b04c; }
.red .back { fill: #a8000e; }
.red .rim { stroke: #a8000e; }
.green .back { fill: #258f47; }
.green .rim { stroke: #218442; }
.listscroll { width: 14px; flex: none; background: #f1eff3; padding: 14px 0 0 6px; }
.listscroll i { display: block; width: 2px; height: 54px; background: #8d8b92; }

.status { display: flex; align-items: center; height: 18px; flex: none; padding: 0 23px 0 2px; border-bottom: 1px solid #c9c7cc; }
.status .sel { margin-right: auto; }
.status svg { width: 10px; height: 10px; margin-right: 2px; }
.status .pos, .status .dim { font-size: 9px; }
.status .pos { margin-right: 11px; }

.taskbar { display: flex; align-items: center; height: 39px; flex: none; background: #f1eff3; }
.weather { display: flex; align-items: flex-start; width: 142px; padding-left: 17px; }
.weather svg { width: 22px; height: 22px; margin-right: -11px; }
.weather span { position: relative; font-size: 9px; line-height: 10px; }
.start svg { width: 20px; height: 20px; }
.search { display: flex; align-items: center; gap: 8px; width: 181px; height: 25px; margin: 0 2px 0 12px; padding-left: 8px; border-radius: 13px; background: #fff; border: 1px solid #eceaee; }
.search svg { width: 13px; height: 13px; fill: none; stroke: #222; stroke-width: 1.4; }
.search input { flex: 1; font-size: 11px; line-height: 16px; }
.search input::placeholder { color: #66646a; opacity: 1; }
.apps { display: grid; grid-template-columns: repeat(16, 1fr); width: 588px; height: 39px; }
.apps button { position: relative; display: grid; place-items: center; border-radius: 4px; }
.apps svg { width: 20px; height: 20px; }
.apps .running::after { content: ""; position: absolute; bottom: 4px; width: 6px; height: 2px; border-radius: 1px; background: #8b898f; }
.apps .focused { margin: 4px 3px 3px; background: #fff; }
.apps .focused::after { bottom: 1px; width: 13px; background: #2079b8; }
.tray { margin-left: auto; display: flex; align-items: center; padding-right: 15px; }
.tray svg { width: 15px; height: 15px; }
.tray .m { width: 27px; display: grid; place-items: center; }
.tray .s { width: 20px; display: grid; place-items: center; }
.clock { display: flex; flex-direction: column; align-items: flex-end; width: 50px; font-size: 10px; line-height: 13px; }
.bell { margin-left: 6px; }
</style>
